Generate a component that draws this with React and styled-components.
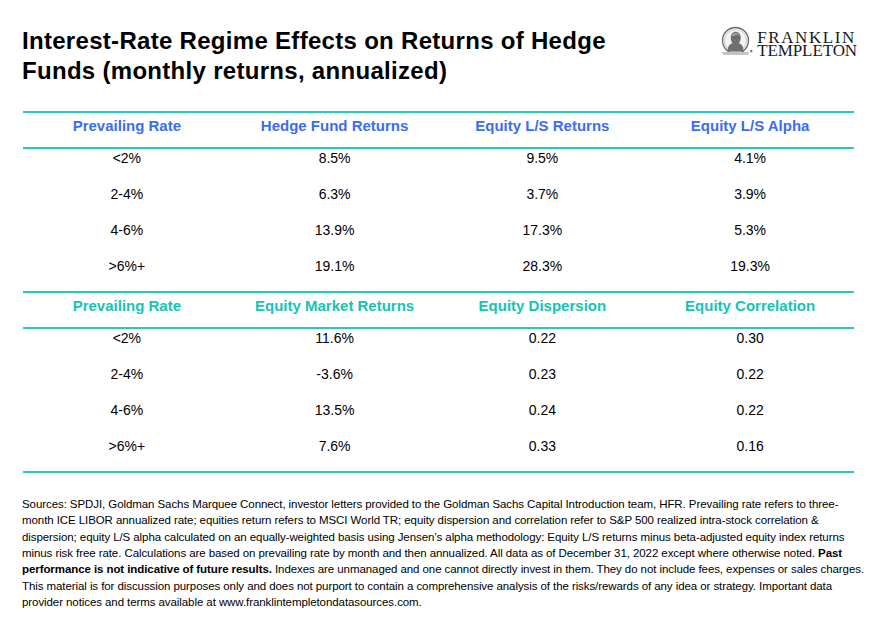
import React from 'react'
import styled, { createGlobalStyle } from 'styled-components'

const GlobalStyle = createGlobalStyle`
  html, body {
    margin: 0;
    padding: 0;
    background: #fff;
  }
  body {
    font-family: 'Liberation Sans', Arial, sans-serif;
    color: #000;
  }
`

const Page = styled.div`
  width: 870px;
  height: 622px;
  box-sizing: border-box;
  padding: 26px 13px 0 22px;
  overflow: hidden;
`

const Header = styled.div`
  display: flex;
  justify-content: space-between;
  align-items: flex-start;
`

const Title = styled.h1`
  margin: 0;
  font-size: 24px;
  line-height: 30px;
  letter-spacing: 0.3px;
  font-weight: 700;
  width: 620px;
`

const Logo = styled.div`
  display: flex;
  align-items: center;
  gap: 4px;
`

const LogoText = styled.div`
  font-family: 'Liberation Serif', 'Times New Roman', serif;
  font-size: 17px;
  line-height: 13px;
  color: #1a1a1a;
  padding-top: 3px;
`

const LogoLine = styled.div`
  letter-spacing: ${p => p.$ls}px;
  white-space: nowrap;
`

const Tables = styled.div`
  margin-top: 25px;
  width: 831px;
  margin-left: 1px;
`

const Row = styled.div`
  display: grid;
  grid-template-columns: repeat(4, 1fr);
  box-sizing: border-box;
  height: 36px;
  align-items: start;
  padding-top: ${p => p.$pt}px;
  border-top: 2px solid ${p => (p.$line ? '#2ac8bc' : 'transparent')};
`

const HeadCell = styled.div`
  text-align: center;
  font-weight: 700;
  font-size: 15px;
  line-height: 18px;
  color: ${p => p.$color};
`

const Cell = styled.div`
  text-align: center;
  font-size: 14px;
  line-height: 16px;
`

const Foot = styled.div`
  border-top: 2px solid #2ac8bc;
  width: 831px;
  margin-left: 1px;
`

const Note = styled.div`
  margin-top: 23px;
  font-size: 11.5px;
  line-height: 16.33px;
  letter-spacing: -0.08px;
  b { font-weight: 700; }
`

const NoteLine = styled.div`
  white-space: nowrap;
`

const Medallion = () => (
  <svg width="33" height="32" viewBox="0 0 33 32">
    <circle cx="15.5" cy="14.5" r="13" fill="#f4f4f4" stroke="#6a6a6a" strokeWidth="1.3" />
    <circle cx="15.5" cy="14.5" r="11" fill="none" stroke="#b0b0b0" strokeWidth="0.6" />
    <path d="M7.5 25.5 C7.5 20 10 18 12.5 17.3 C10.3 14.5 10.2 9.5 12.2 7.3 C14.3 5 18.6 5.2 20 8.3 C21.5 11.5 20.8 14.8 18.8 17.2 C21.5 17.8 23.5 20 23.5 25.5 Z" fill="#707070" />
    <path d="M11.8 9.5 C12.8 6.8 17.5 6 19.7 8.8 C18.2 8.3 15 8.4 13.2 10.8 Z" fill="#a5a5a5" />
    <path d="M14 11.5 L15.5 11.2 M17 11.2 L18.5 11.5" stroke="#444" strokeWidth="0.7" />
    <path d="M1.5 26 L29.5 26 L27.5 29 L3.5 29 Z" fill="#c4c4c4" />
    <circle cx="31.3" cy="25" r="1.2" fill="#777" />
  </svg>
)

const top = {
  head: ['Prevailing Rate', 'Hedge Fund Returns', 'Equity L/S Returns', 'Equity L/S Alpha'],
  rows: [
    ['<2%', '8.5%', '9.5%', '4.1%'],
    ['2-4%', '6.3%', '3.7%', '3.9%'],
    ['4-6%', '13.9%', '17.3%', '5.3%'],
    ['>6%+', '19.1%', '28.3%', '19.3%'],
  ],
}

const bottom = {
  head: ['Prevailing Rate', 'Equity Market Returns', 'Equity Dispersion', 'Equity Correlation'],
  rows: [
    ['<2%', '11.6%', '0.22', '0.30'],
    ['2-4%', '-3.6%', '0.23', '0.22'],
    ['4-6%', '13.5%', '0.24', '0.22'],
    ['>6%+', '7.6%', '0.33', '0.16'],
  ],
}

const Table = ({ data, color }) => (
  <>
    <Row $line $pt={4}>
      {data.head.map(h => (
        <HeadCell key={h} $color={color}>{h}</HeadCell>
      ))}
    </Row>
    {data.rows.map((r, j) => (
      <Row key={j} $line={j === 0} $pt={1}>
        {r.map((c, i) => <Cell key={i}>{c}</Cell>)}
      </Row>
    ))}
  </>
)

export default function App() {
  return (
    <>
      <GlobalStyle />
      <Page>
        <Header>
          <Title>Interest-Rate Regime Effects on Returns of Hedge<br />Funds (monthly returns, annualized)</Title>
          <Logo>
            <Medallion />
            <LogoText>
              <LogoLine $ls={1.6}>FRANKLIN</LogoLine>
              <LogoLine $ls={-0.1}>TEMPLETON</LogoLine>
            </LogoText>
          </Logo>
        </Header>
        <Tables>
          <Table data={top} color="#3b6cf2" />
          <Table data={bottom} color="#17c3b3" />
        </Tables>
        <Foot />
        <Note>
          <NoteLine>Sources: SPDJI, Goldman Sachs Marquee Connect, investor letters provided to the Goldman Sachs Capital Introduction team, HFR. Prevailing rate refers to three-</NoteLine>
          <NoteLine>month ICE LIBOR annualized rate; equities return refers to MSCI World TR; equity dispersion and correlation refer to S&amp;P 500 realized intra-stock correlation &amp;</NoteLine>
          <NoteLine>dispersion; equity L/S alpha calculated on an equally-weighted basis using Jensen’s alpha methodology: Equity L/S returns minus beta-adjusted equity index returns</NoteLine>
          <NoteLine>minus risk free rate. Calculations are based on prevailing rate by month and then annualized. All data as of December 31, 2022 except where otherwise noted. <b>Past</b></NoteLine>
          <NoteLine><b>performance is not indicative of future results.</b> Indexes are unmanaged and one cannot directly invest in them. They do not include fees, expenses or sales charges.</NoteLine>
          <NoteLine>This material is for discussion purposes only and does not purport to contain a comprehensive analysis of the risks/rewards of any idea or strategy. Important data</NoteLine>
          <NoteLine>provider notices and terms available at www.franklintempletondatasources.com.</NoteLine>
        </Note>
      </Page>
    </>
  )
}
